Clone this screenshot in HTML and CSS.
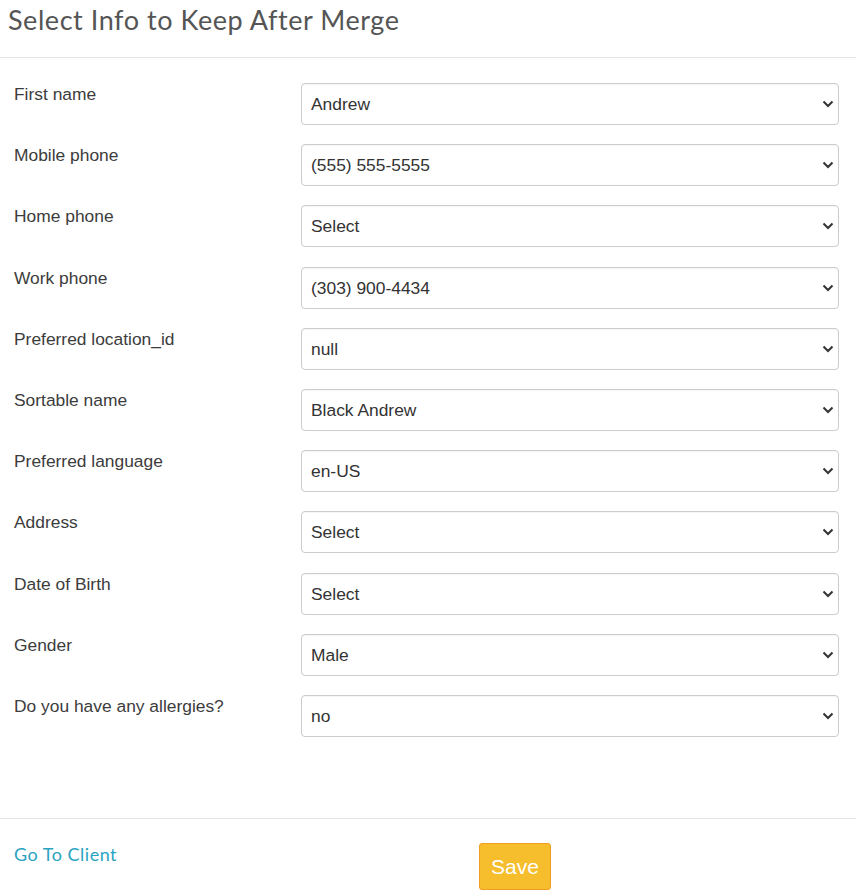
FILE: index.html
```html
<!DOCTYPE html>
<html>
<head>
<meta charset="utf-8">
<link rel="stylesheet" href="styles.css">
</head>
<body>
<div class="page">
  <header class="head">
    <h1 class="title">Select Info to Keep After Merge</h1>
  </header>
  <form class="form">
    <div class="row"><label class="lbl">First name</label><div class="sel"><select><option>Andrew</option></select><svg class="chev" viewBox="0 0 12 8"><path d="M1.5 1.5 L6 6 L10.5 1.5" /></svg></div></div>
    <div class="row"><label class="lbl">Mobile phone</label><div class="sel"><select><option>(555) 555-5555</option></select><svg class="chev" viewBox="0 0 12 8"><path d="M1.5 1.5 L6 6 L10.5 1.5" /></svg></div></div>
    <div class="row"><label class="lbl">Home phone</label><div class="sel"><select><option>Select</option></select><svg class="chev" viewBox="0 0 12 8"><path d="M1.5 1.5 L6 6 L10.5 1.5" /></svg></div></div>
    <div class="row"><label class="lbl">Work phone</label><div class="sel"><select><option>(303) 900-4434</option></select><svg class="chev" viewBox="0 0 12 8"><path d="M1.5 1.5 L6 6 L10.5 1.5" /></svg></div></div>
    <div class="row"><label class="lbl">Preferred location_id</label><div class="sel"><select><option>null</option></select><svg class="chev" viewBox="0 0 12 8"><path d="M1.5 1.5 L6 6 L10.5 1.5" /></svg></div></div>
    <div class="row"><label class="lbl">Sortable name</label><div class="sel"><select><option>Black Andrew</option></select><svg class="chev" viewBox="0 0 12 8"><path d="M1.5 1.5 L6 6 L10.5 1.5" /></svg></div></div>
    <div class="row"><label class="lbl">Preferred language</label><div class="sel"><select><option>en-US</option></select><svg class="chev" viewBox="0 0 12 8"><path d="M1.5 1.5 L6 6 L10.5 1.5" /></svg></div></div>
    <div class="row"><label class="lbl">Address</label><div class="sel"><select><option>Select</option></select><svg class="chev" viewBox="0 0 12 8"><path d="M1.5 1.5 L6 6 L10.5 1.5" /></svg></div></div>
    <div class="row"><label class="lbl">Date of Birth</label><div class="sel"><select><option>Select</option></select><svg class="chev" viewBox="0 0 12 8"><path d="M1.5 1.5 L6 6 L10.5 1.5" /></svg></div></div>
    <div class="row"><label class="lbl">Gender</label><div class="sel"><select><option>Male</option></select><svg class="chev" viewBox="0 0 12 8"><path d="M1.5 1.5 L6 6 L10.5 1.5" /></svg></div></div>
    <div class="row"><label class="lbl">Do you have any allergies?</label><div class="sel"><select><option>no</option></select><svg class="chev" viewBox="0 0 12 8"><path d="M1.5 1.5 L6 6 L10.5 1.5" /></svg></div></div>
  </form>
  <footer class="foot">
    <a class="link" href="#">Go To Client</a>
    <button class="save" type="button">Save</button>
  </footer>
</div>
</body>
</html>
```
FILE: styles.css
```css
html, body {
  margin: 0;
  padding: 0;
  background: #fff;
}
.page {
  width: 856px;
  font-family: "Liberation Sans", Arial, sans-serif;
  color: #333;
}
.head {
  height: 58px;
  border-bottom: 1px solid #e5e5e5;
  padding-left: 8px;
  box-sizing: border-box;
}
.title {
  margin: 0;
  padding-top: 4px;
  font-family: Lato, "Open Sans", sans-serif;
  font-weight: 400;
  font-size: 27px;
  line-height: 32px;
  color: #555;
  letter-spacing: 0.55px;
}
.form {
  padding: 25px 17px 0 14px;
  height: 761px;
  box-sizing: border-box;
  border-bottom: 1px solid #e5e5e5;
  display: flex;
  flex-direction: column;
  gap: 19.2px;
}
.row {
  display: flex;
  height: 42px;
}
.lbl {
  width: 287px;
  flex: none;
  font-size: 17.4px;
  line-height: 22px;
  color: #3c3c3c;
}
.sel {
  position: relative;
  flex: 1;
}
.sel select {
  appearance: none;
  -webkit-appearance: none;
  width: 100%;
  height: 42px;
  box-sizing: border-box;
  border: 1px solid #ccc;
  border-radius: 4px;
  background: #fff;
  padding: 0 30px 0 9px;
  font-family: "Liberation Sans", Arial, sans-serif;
  font-size: 17.4px;
  color: #333;
  box-shadow: inset 0 1px 1px rgba(0,0,0,0.04);
}
.chev {
  position: absolute;
  right: 5px;
  top: 17px;
  width: 12px;
  height: 8px;
  fill: none;
  stroke: #333;
  stroke-width: 2;
  pointer-events: none;
}
.foot {
  position: relative;
  height: 73px;
}
.link {
  position: absolute;
  left: 14px;
  top: 24px;
  font-family: Lato, "Open Sans", sans-serif;
  font-size: 18px;
  letter-spacing: 0.5px;
  color: #2aa3c2;
  text-decoration: none;
}
.save {
  position: absolute;
  left: 479px;
  top: 24px;
  width: 72px;
  height: 47px;
  box-sizing: border-box;
  background: #f6bd2c;
  border: 1px solid #ef9e22;
  border-radius: 3px;
  color: #fff;
  font-family: "Liberation Sans", Arial, sans-serif;
  font-size: 21px;
  padding: 0;
}
```
